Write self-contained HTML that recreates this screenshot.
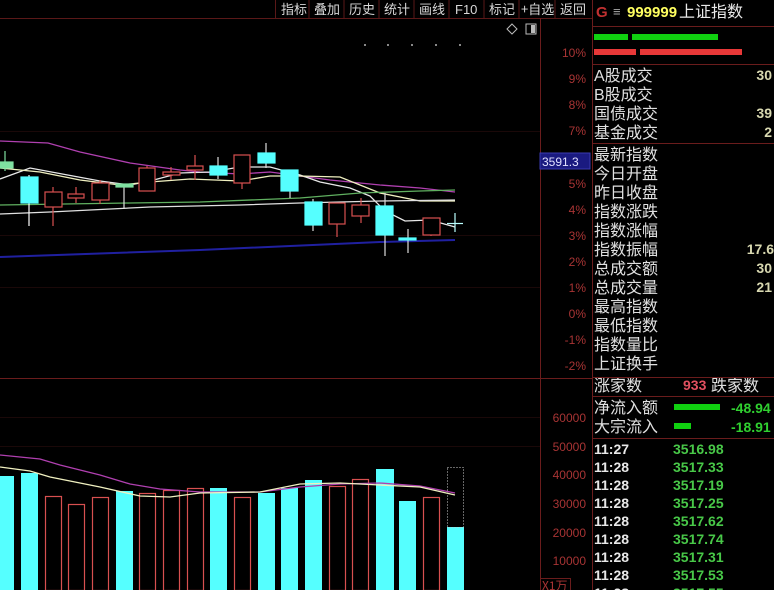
<!DOCTYPE html>
<html><head><meta charset="utf-8"><style>
html,body{margin:0;padding:0;background:#000;width:774px;height:590px;overflow:hidden}
svg{display:block}
text{font-family:"Liberation Sans","Noto Sans CJK SC",sans-serif}
.cn{font-family:"Noto Sans CJK SC","WenQuanYi Zen Hei",sans-serif}
</style></head><body>
<svg width="774" height="590" viewBox="0 0 774 590" xmlns="http://www.w3.org/2000/svg">
<rect width="774" height="590" fill="#000"/>
<line x1="0" y1="18.5" x2="592" y2="18.5" stroke="#5a1818"/>
<g stroke="#5a1818"><line x1="275.5" y1="0" x2="275.5" y2="18"/><line x1="309" y1="0" x2="309" y2="18"/><line x1="344" y1="0" x2="344" y2="18"/><line x1="379" y1="0" x2="379" y2="18"/><line x1="414" y1="0" x2="414" y2="18"/><line x1="449" y1="0" x2="449" y2="18"/><line x1="484" y1="0" x2="484" y2="18"/><line x1="519" y1="0" x2="519" y2="18"/><line x1="555" y1="0" x2="555" y2="18"/></g>
<g fill="#d8d8d8" font-size="13" class="cn">
<text x="281" y="14" class="cn">指标</text><text x="314" y="14" class="cn">叠加</text><text x="349" y="14" class="cn">历史</text><text x="384" y="14" class="cn">统计</text><text x="419" y="14" class="cn">画线</text><text x="455" y="14">F10</text><text x="489" y="14" class="cn">标记</text><text x="521" y="14" class="cn">+自选</text><text x="560" y="14" class="cn">返回</text>
</g>
<path d="M512 24 L517 29 L512 34 L507 29 Z" fill="none" stroke="#bbb"/>
<rect x="526" y="24" width="10" height="10" fill="none" stroke="#bbb"/><rect x="531" y="25" width="4" height="8" fill="#bbb"/>
<g fill="#888"><rect x="364" y="44" width="2" height="2"/><rect x="387" y="44" width="2" height="2"/><rect x="411" y="44" width="2" height="2"/><rect x="435" y="44" width="2" height="2"/><rect x="459" y="44" width="2" height="2"/></g>
<line x1="540.5" y1="18" x2="540.5" y2="590" stroke="#6a1c1c"/>
<line x1="592.5" y1="0" x2="592.5" y2="590" stroke="#6a1c1c"/>
<line x1="0" y1="378.5" x2="592" y2="378.5" stroke="#6a1c1c"/>
<g stroke="#1a0808"><line x1="0" y1="417.5" x2="540" y2="417.5"/><line x1="0" y1="446.5" x2="540" y2="446.5"/><line x1="0" y1="131.5" x2="540" y2="131.5"/><line x1="0" y1="235.5" x2="540" y2="235.5"/><line x1="0" y1="287.5" x2="540" y2="287.5"/></g>
<g fill="#a83434" font-size="12" text-anchor="end">
<text x="586" y="57">10%</text><text x="586" y="83">9%</text><text x="586" y="109">8%</text><text x="586" y="135">7%</text><text x="586" y="188">5%</text><text x="586" y="214">4%</text><text x="586" y="240">3%</text><text x="586" y="266">2%</text><text x="586" y="292">1%</text><text x="586" y="318">0%</text><text x="586" y="344">-1%</text><text x="586" y="370">-2%</text>
<text x="586" y="422">60000</text><text x="586" y="451">50000</text><text x="586" y="479">40000</text><text x="586" y="508">30000</text><text x="586" y="537">20000</text><text x="586" y="565">10000</text>
</g>
<rect x="540" y="153" width="50" height="16" fill="#1a1a80" stroke="#3a3ab0"/>
<text x="542" y="166" fill="#e0e0ff" font-size="12">3591.3</text>
<rect x="540.5" y="578.5" width="30" height="12" fill="none" stroke="#6a1c1c"/>
<text x="542" y="590" fill="#a83434" font-size="12" class="cn">X1万</text>
<g fill="none" stroke-width="1.3">
<polyline stroke="#b040b0" points="0,141 48,143 80,152 130,163 180,170 200,172 240,174 270,172 300,176 330,180 380,185 420,188 455,192"/>
<polyline stroke="#e8e8e8" points="0,179 30,168 100,181 130,185 150,181 180,173 210,172 240,167 270,167 300,175 320,182 350,188 370,196 385,211 405,221 430,220 455,227"/>
<polyline stroke="#f0f0c0" points="0,168 40,172 80,180 120,185 150,182 190,179 240,181 270,176 300,176 340,177 380,193 420,201 455,201"/>
<polyline stroke="#60b060" points="0,205 130,203 200,202 300,198 360,193 420,191 455,190"/>
<polyline stroke="#e0e0e0" points="0,214 50,212 150,207 240,205 300,203 380,201 455,200"/>
<polyline stroke="#2020a0" stroke-width="2" points="0,257 200,250 380,242 455,240"/>
</g>
<g stroke-width="1.2">
<g stroke="#7fe0a0"><line x1="5" y1="151" x2="5" y2="171"/><rect x="0" y="162" width="13" height="6" fill="#7fe0a0"/></g>
<g stroke="#55ffff"><line x1="29" y1="175" x2="29" y2="226" stroke="#fff"/><rect x="21" y="177" width="17" height="26" fill="#55ffff"/></g>
<g stroke="#d85050"><line x1="53" y1="187" x2="53" y2="226"/><rect x="45" y="192" width="17" height="15" fill="#000"/></g>
<g stroke="#d85050"><line x1="76" y1="187" x2="76" y2="203"/><rect x="68" y="194" width="16" height="4" fill="#000"/></g>
<g stroke="#d85050"><line x1="100" y1="180" x2="100" y2="204"/><rect x="92" y="183" width="17" height="17" fill="#000"/></g>
<g stroke="#7fe0a0"><line x1="124" y1="184" x2="124" y2="209" stroke="#ddd"/><rect x="116" y="184" width="17" height="3" fill="#7fe0a0"/></g>
<g stroke="#d85050"><line x1="147" y1="166" x2="147" y2="191"/><rect x="139" y="168" width="16" height="23" fill="#000"/></g>
<g stroke="#d85050"><line x1="171" y1="167" x2="171" y2="180"/><rect x="163" y="172" width="17" height="3" fill="#000"/></g>
<g stroke="#d85050"><line x1="195" y1="155" x2="195" y2="180"/><rect x="187" y="166" width="16" height="4" fill="#000"/></g>
<g stroke="#55ffff"><line x1="218" y1="157" x2="218" y2="179" stroke="#ddd"/><rect x="210" y="166" width="17" height="9" fill="#55ffff"/></g>
<g stroke="#d85050"><line x1="242" y1="155" x2="242" y2="189"/><rect x="234" y="155" width="16" height="28" fill="#000"/></g>
<g stroke="#55ffff"><line x1="266" y1="143" x2="266" y2="168" stroke="#ddd"/><rect x="258" y="153" width="17" height="10" fill="#55ffff"/></g>
<g stroke="#55ffff"><line x1="290" y1="170" x2="290" y2="198" stroke="#ddd"/><rect x="281" y="170" width="17" height="21" fill="#55ffff"/></g>
<g stroke="#55ffff"><line x1="313" y1="199" x2="313" y2="231" stroke="#ddd"/><rect x="305" y="202" width="17" height="23" fill="#55ffff"/></g>
<g stroke="#d85050"><line x1="337" y1="203" x2="337" y2="237"/><rect x="329" y="203" width="16" height="21" fill="#000"/></g>
<g stroke="#d85050"><line x1="361" y1="198" x2="361" y2="223"/><rect x="352" y="205" width="17" height="11" fill="#000"/></g>
<g stroke="#55ffff"><line x1="385" y1="193" x2="385" y2="256" stroke="#ddd"/><rect x="376" y="206" width="17" height="29" fill="#55ffff"/></g>
<g stroke="#55ffff"><line x1="408" y1="229" x2="408" y2="253" stroke="#ddd"/><rect x="399" y="238" width="17" height="2" fill="#55ffff"/></g>
<g stroke="#d85050"><line x1="431" y1="218" x2="431" y2="236"/><rect x="423" y="218" width="17" height="17" fill="#000"/></g>
<g stroke="#bff"><line x1="455" y1="213" x2="455" y2="232"/><line x1="447" y1="223.5" x2="463" y2="223.5"/></g>
</g>
<g fill="#55ffff">
<rect x="0" y="476" width="14" height="114"/><rect x="21" y="473" width="17" height="117"/><rect x="116" y="491" width="17" height="99"/><rect x="210" y="488" width="17" height="102"/><rect x="258" y="493" width="17" height="97"/><rect x="281" y="488" width="17" height="102"/><rect x="305" y="480" width="17" height="110"/><rect x="376" y="469" width="18" height="121"/><rect x="399" y="501" width="17" height="89"/><rect x="447" y="527" width="17" height="63"/>
</g>
<g fill="none" stroke="#d85050" stroke-width="1.2">
<rect x="45.5" y="496.5" width="16" height="94"/><rect x="68.5" y="504.5" width="16" height="86"/><rect x="92.5" y="497.5" width="16" height="93"/><rect x="139.5" y="493.5" width="16" height="97"/><rect x="163.5" y="490.5" width="16" height="100"/><rect x="187.5" y="488.5" width="16" height="102"/><rect x="234.5" y="497.5" width="16" height="93"/><rect x="329.5" y="486.5" width="16" height="104"/><rect x="352.5" y="479.5" width="16" height="111"/><rect x="423.5" y="497.5" width="16" height="93"/>
</g>
<rect x="447.5" y="467.5" width="16" height="60" fill="none" stroke="#ccc" stroke-dasharray="1,2"/>
<g fill="none" stroke-width="1.3">
<polyline stroke="#b040b0" points="0,455 40,459 60,465 100,475 130,484 160,489 200,492 260,492 300,487 340,484 380,483 420,486 455,493"/>
<polyline stroke="#f0f0c0" points="0,467 30,471 50,477 100,487 140,496 170,497 200,493 260,492 300,484 340,483 380,485 420,487 455,495"/>
</g>
<text x="596" y="17" fill="#c03030" font-size="15" font-weight="bold">G</text>
<text x="613" y="16" fill="#aaa" font-size="13">≡</text>
<text x="627" y="17" fill="#ffff60" font-size="15" font-weight="bold">999999</text>
<text x="679" y="17" fill="#e8e8e8" font-size="16" class="cn">上证指数</text>
<line x1="592" y1="26.5" x2="774" y2="26.5" stroke="#6a1c1c"/>
<rect x="594" y="34" width="34" height="6" fill="#10d010"/><rect x="632" y="34" width="86" height="6" fill="#10d010"/>
<rect x="594" y="49" width="42" height="6" fill="#e83838"/><rect x="640" y="49" width="102" height="6" fill="#e83838"/>
<line x1="592" y1="64.5" x2="774" y2="64.5" stroke="#6a1c1c"/>
<g fill="#e0e0e0" font-size="16" class="cn">
<text x="594" y="81">A股成交</text><text x="594" y="100">B股成交</text><text x="594" y="119">国债成交</text><text x="594" y="138">基金成交</text>
<text x="594" y="160">最新指数</text><text x="594" y="179">今日开盘</text><text x="594" y="198">昨日收盘</text><text x="594" y="217">指数涨跌</text><text x="594" y="236">指数涨幅</text><text x="594" y="255">指数振幅</text><text x="594" y="274">总成交额</text><text x="594" y="293">总成交量</text><text x="594" y="312">最高指数</text><text x="594" y="331">最低指数</text><text x="594" y="350">指数量比</text><text x="594" y="369">上证换手</text>
<text x="594" y="391">涨家数</text><text x="711" y="391">跌家数</text>
<text x="594" y="413">净流入额</text><text x="594" y="432">大宗流入</text>
</g>
<g fill="#d8d8b0" font-size="14" font-weight="bold" text-anchor="end">
<text x="772" y="80">30</text><text x="772" y="118">39</text><text x="772" y="137">2</text><text x="774" y="254">17.6</text><text x="772" y="273">30</text><text x="772" y="292">21</text>
</g>
<line x1="592" y1="143.5" x2="774" y2="143.5" stroke="#6a1c1c"/>
<line x1="592" y1="377.5" x2="774" y2="377.5" stroke="#6a1c1c"/>
<line x1="592" y1="396.5" x2="774" y2="396.5" stroke="#6a1c1c"/>
<line x1="592" y1="438.5" x2="774" y2="438.5" stroke="#6a1c1c"/>
<text x="683" y="390" fill="#e05060" font-size="14" font-weight="bold">933</text>
<rect x="674" y="404" width="46" height="6" fill="#10d010"/><rect x="674" y="423" width="17" height="6" fill="#10d010"/>
<g fill="#30d030" font-size="14" font-weight="bold"><text x="731" y="413">-48.94</text><text x="731" y="432">-18.91</text></g>
<g fill="#e8e8e8" font-size="14" font-weight="bold">
<text x="594" y="454">11:27</text><text x="594" y="472">11:28</text><text x="594" y="490">11:28</text><text x="594" y="508">11:28</text><text x="594" y="526">11:28</text><text x="594" y="544">11:28</text><text x="594" y="562">11:28</text><text x="594" y="580">11:28</text><text x="594" y="598">11:28</text>
</g>
<g fill="#48c848" font-size="14" font-weight="bold">
<text x="673" y="454">3516.98</text><text x="673" y="472">3517.33</text><text x="673" y="490">3517.19</text><text x="673" y="508">3517.25</text><text x="673" y="526">3517.62</text><text x="673" y="544">3517.74</text><text x="673" y="562">3517.31</text><text x="673" y="580">3517.53</text><text x="673" y="598">3517.55</text>
</g>
</svg>
</body></html>
